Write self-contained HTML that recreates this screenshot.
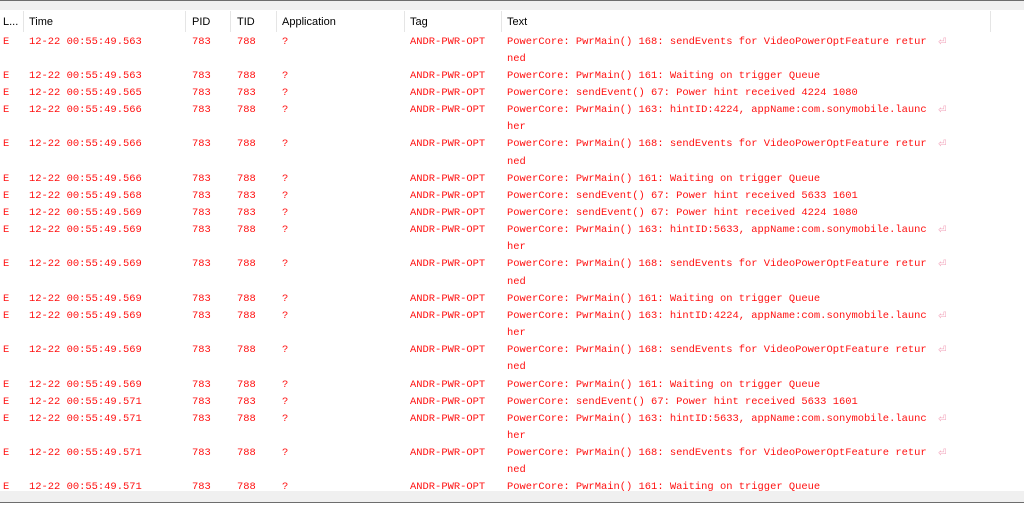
<!DOCTYPE html>
<html><head><meta charset="utf-8"><style>
html,body{margin:0;padding:0;width:1024px;height:505px;overflow:hidden;background:#fff;position:relative}
.topbar{position:absolute;left:0;top:0;width:1024px;height:10px;background:#f0f0f0;border-top:1px solid #6d6d6d;box-sizing:border-box}
.hdr{position:absolute;top:12px;height:22px;font:11px "Liberation Sans",sans-serif;color:#000;line-height:20px}
.sep{position:absolute;top:11px;height:21px;width:1px;background:#e5e5e5}
.r{position:absolute;font:10.45px "Liberation Mono",monospace;color:#ff1010;white-space:pre;line-height:17px;height:17px}
.w{position:absolute;left:938px;font:10px "DejaVu Sans",sans-serif;color:#f2a0b8;line-height:17px}
.botbar{position:absolute;left:0;top:491px;width:1024px;height:12px;background:#f0f0f0;border-bottom:1px solid #6d6d6d;box-sizing:border-box}
</style></head><body>
<div class="topbar"></div>
<div class="hdr" style="left:3px">L...</div>
<div class="hdr" style="left:29px">Time</div>
<div class="hdr" style="left:192px">PID</div>
<div class="hdr" style="left:237px">TID</div>
<div class="hdr" style="left:282px">Application</div>
<div class="hdr" style="left:410px">Tag</div>
<div class="hdr" style="left:507px">Text</div>
<div class="sep" style="left:23px"></div>
<div class="sep" style="left:185px"></div>
<div class="sep" style="left:230px"></div>
<div class="sep" style="left:276px"></div>
<div class="sep" style="left:404px"></div>
<div class="sep" style="left:501px"></div>
<div class="sep" style="left:990px"></div>
<div id="rows"></div>
<script>
var data=[
["12-22 00:55:49.563","783","788","PowerCore: PwrMain() 168: sendEvents for VideoPowerOptFeature retur","ned"],
["12-22 00:55:49.563","783","788","PowerCore: PwrMain() 161: Waiting on trigger Queue"],
["12-22 00:55:49.565","783","783","PowerCore: sendEvent() 67: Power hint received 4224 1080"],
["12-22 00:55:49.566","783","788","PowerCore: PwrMain() 163: hintID:4224, appName:com.sonymobile.launc","her"],
["12-22 00:55:49.566","783","788","PowerCore: PwrMain() 168: sendEvents for VideoPowerOptFeature retur","ned"],
["12-22 00:55:49.566","783","788","PowerCore: PwrMain() 161: Waiting on trigger Queue"],
["12-22 00:55:49.568","783","783","PowerCore: sendEvent() 67: Power hint received 5633 1601"],
["12-22 00:55:49.569","783","783","PowerCore: sendEvent() 67: Power hint received 4224 1080"],
["12-22 00:55:49.569","783","788","PowerCore: PwrMain() 163: hintID:5633, appName:com.sonymobile.launc","her"],
["12-22 00:55:49.569","783","788","PowerCore: PwrMain() 168: sendEvents for VideoPowerOptFeature retur","ned"],
["12-22 00:55:49.569","783","788","PowerCore: PwrMain() 161: Waiting on trigger Queue"],
["12-22 00:55:49.569","783","788","PowerCore: PwrMain() 163: hintID:4224, appName:com.sonymobile.launc","her"],
["12-22 00:55:49.569","783","788","PowerCore: PwrMain() 168: sendEvents for VideoPowerOptFeature retur","ned"],
["12-22 00:55:49.569","783","788","PowerCore: PwrMain() 161: Waiting on trigger Queue"],
["12-22 00:55:49.571","783","783","PowerCore: sendEvent() 67: Power hint received 5633 1601"],
["12-22 00:55:49.571","783","788","PowerCore: PwrMain() 163: hintID:5633, appName:com.sonymobile.launc","her"],
["12-22 00:55:49.571","783","788","PowerCore: PwrMain() 168: sendEvents for VideoPowerOptFeature retur","ned"],
["12-22 00:55:49.571","783","788","PowerCore: PwrMain() 161: Waiting on trigger Queue"]
];
var h="",y=33.5;
function d(x,t,yy){h+='<div class="r" style="left:'+x+'px;top:'+yy+'px">'+t+'</div>';}
for(var i=0;i<data.length;i++){var r=data[i];
d(3,"E",y);d(29,r[0],y);d(192,r[1],y);d(237,r[2],y);d(282,"?",y);d(410,"ANDR-PWR-OPT",y);d(507,r[3],y);
if(r[4]){h+='<div class="w" style="top:'+y+'px">&#x23CE;</div>';y+=17.15;d(507,r[4],y);}
y+=17.15;}
document.getElementById("rows").innerHTML=h;
</script>
<div class="botbar"></div>
</body></html>
